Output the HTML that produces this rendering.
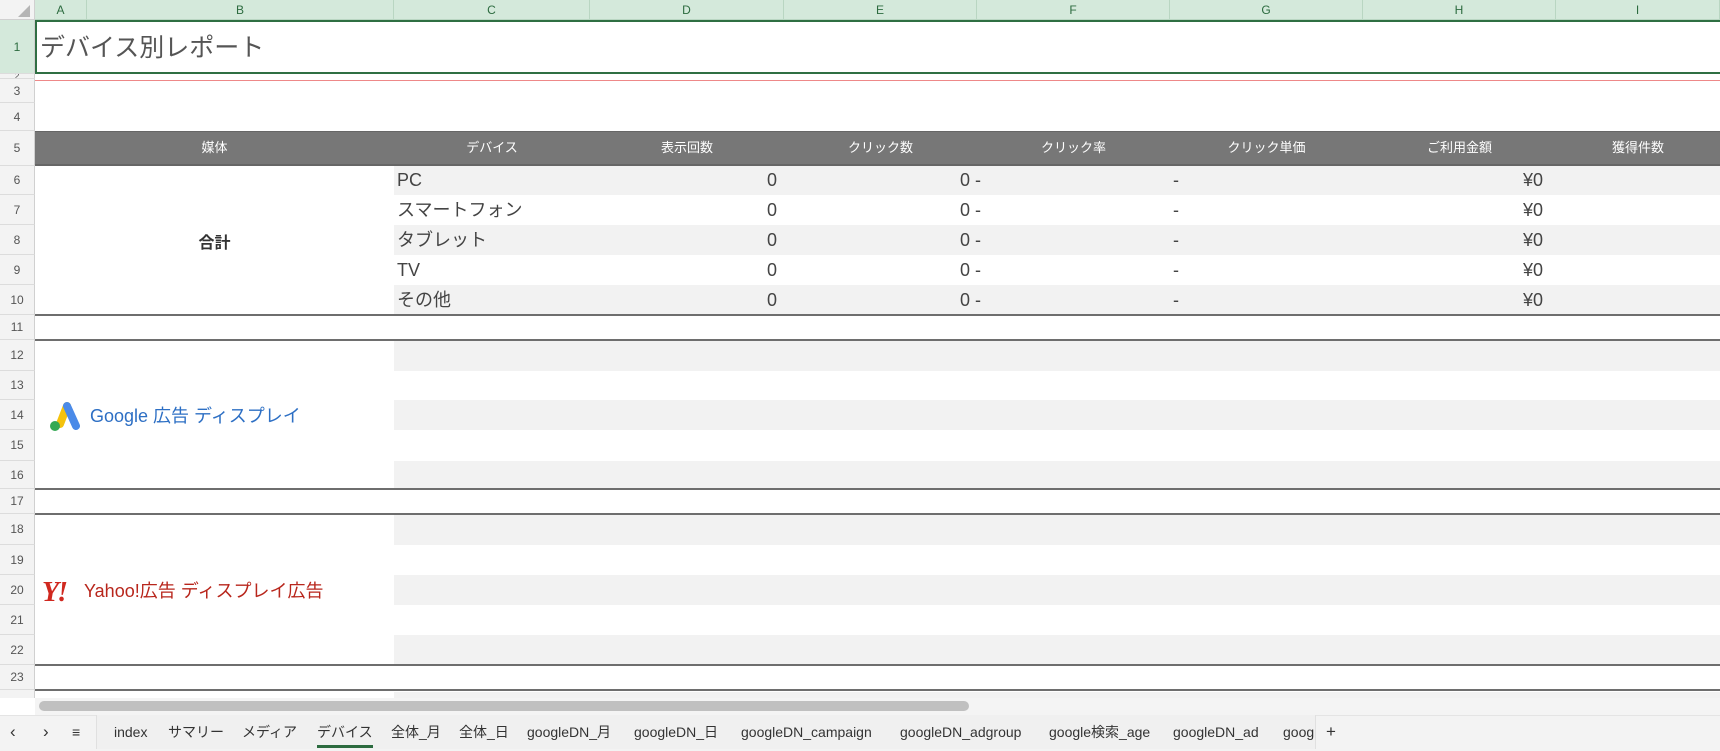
<!DOCTYPE html>
<html><head><meta charset="utf-8"><style>
*{margin:0;padding:0;box-sizing:border-box}
body{width:1720px;height:751px;overflow:hidden;background:#fff;font-family:"Liberation Sans","Noto Sans CJK JP",sans-serif;position:relative;color:#444}
.a{position:absolute}
.ch{top:0;height:20px;background:#d4e9db;border-right:1px solid #b9d6c2;border-bottom:1px solid #b9d6c2;font-size:12px;color:#2c6b3f;text-align:center;line-height:20px}
.rh{left:0;width:35px;background:#f3f3f3;border-bottom:1px solid #dcdcdc;border-right:1px solid #d0d0d0;font-size:12px;color:#555;text-align:center}
.g{background:#f2f2f2}
.hd{color:#fff;font-size:13px;text-align:center;top:131px;height:34px;line-height:34px}
.t{font-size:18px;color:#444;height:30px;line-height:30px;white-space:nowrap}
.thick{left:35px;width:1685px;height:2px;background:#6e6e6e}
.tab{top:715px;height:34px;line-height:34px;font-size:14px;color:#333;white-space:nowrap}
</style></head><body>
<div class="a ch" style="left:0;width:35px;background:#f3f3f3;border-color:#d0d0d0"></div>
<svg class="a" style="left:18px;top:5px" width="12" height="12"><polygon points="12,0 12,12 0,12" fill="#b5b5b5"/></svg>
<div class="a ch" style="left:35px;width:52px">A</div>
<div class="a ch" style="left:87px;width:307px">B</div>
<div class="a ch" style="left:394px;width:196px">C</div>
<div class="a ch" style="left:590px;width:194px">D</div>
<div class="a ch" style="left:784px;width:193px">E</div>
<div class="a ch" style="left:977px;width:193px">F</div>
<div class="a ch" style="left:1170px;width:193px">G</div>
<div class="a ch" style="left:1363px;width:193px">H</div>
<div class="a ch" style="left:1556px;width:164px">I</div>
<div class="a rh" style="top:20px;height:54px;line-height:54px;background:#d4e9db;color:#2c6b3f">1</div>
<div class="a rh" style="top:74px;height:5px;font-size:9px;line-height:5px;overflow:hidden">2</div>
<div class="a rh" style="top:79px;height:24px;line-height:24px">3</div>
<div class="a rh" style="top:103px;height:28px;line-height:28px">4</div>
<div class="a rh" style="top:131px;height:35px;line-height:35px">5</div>
<div class="a rh" style="top:166px;height:29px;line-height:29px">6</div>
<div class="a rh" style="top:195px;height:30px;line-height:30px">7</div>
<div class="a rh" style="top:225px;height:30px;line-height:30px">8</div>
<div class="a rh" style="top:255px;height:30px;line-height:30px">9</div>
<div class="a rh" style="top:285px;height:30px;line-height:30px">10</div>
<div class="a rh" style="top:315px;height:25px;line-height:25px">11</div>
<div class="a rh" style="top:340px;height:31px;line-height:31px">12</div>
<div class="a rh" style="top:371px;height:29px;line-height:29px">13</div>
<div class="a rh" style="top:400px;height:30px;line-height:30px">14</div>
<div class="a rh" style="top:430px;height:31px;line-height:31px">15</div>
<div class="a rh" style="top:461px;height:28px;line-height:28px">16</div>
<div class="a rh" style="top:489px;height:25px;line-height:25px">17</div>
<div class="a rh" style="top:514px;height:31px;line-height:31px">18</div>
<div class="a rh" style="top:545px;height:30px;line-height:30px">19</div>
<div class="a rh" style="top:575px;height:30px;line-height:30px">20</div>
<div class="a rh" style="top:605px;height:30px;line-height:30px">21</div>
<div class="a rh" style="top:635px;height:30px;line-height:30px">22</div>
<div class="a rh" style="top:665px;height:25px;line-height:25px">23</div>
<div class="a rh" style="top:690px;height:8px;border-bottom:none"></div>
<div class="a" style="left:35px;top:20px;width:1685px;height:54px;border:2px solid #2f6f43;border-right:none"></div>
<div class="a" style="left:40px;top:31px;font-size:25px;color:#555;line-height:34px">デバイス別レポート</div>
<div class="a" style="left:35px;top:80px;width:1685px;height:1px;background:#e88"></div>
<div class="a" style="left:35px;top:131px;width:1685px;height:35px;background:#777;border-top:1px solid #666;border-bottom:2px solid #666"></div>
<div class="a hd" style="left:35px;width:359px">媒体</div>
<div class="a hd" style="left:394px;width:196px">デバイス</div>
<div class="a hd" style="left:590px;width:194px">表示回数</div>
<div class="a hd" style="left:784px;width:193px">クリック数</div>
<div class="a hd" style="left:977px;width:193px">クリック率</div>
<div class="a hd" style="left:1170px;width:193px">クリック単価</div>
<div class="a hd" style="left:1363px;width:193px">ご利用金額</div>
<div class="a hd" style="left:1556px;width:164px">獲得件数</div>
<div class="a g" style="left:394px;top:166px;width:1326px;height:29px"></div>
<div class="a g" style="left:394px;top:225px;width:1326px;height:30px"></div>
<div class="a g" style="left:394px;top:285px;width:1326px;height:30px"></div>
<div class="a g" style="left:394px;top:340px;width:1326px;height:31px"></div>
<div class="a g" style="left:394px;top:400px;width:1326px;height:30px"></div>
<div class="a g" style="left:394px;top:461px;width:1326px;height:28px"></div>
<div class="a g" style="left:394px;top:514px;width:1326px;height:31px"></div>
<div class="a g" style="left:394px;top:575px;width:1326px;height:30px"></div>
<div class="a g" style="left:394px;top:635px;width:1326px;height:30px"></div>
<div class="a g" style="left:394px;top:692px;width:1326px;height:6px"></div>
<div class="a thick" style="top:314px"></div>
<div class="a thick" style="top:339px"></div>
<div class="a thick" style="top:488px"></div>
<div class="a thick" style="top:513px"></div>
<div class="a thick" style="top:664px"></div>
<div class="a thick" style="top:689px"></div>
<div class="a" style="left:35px;top:231px;width:359px;text-align:center;font-size:16px;color:#333;font-weight:bold;line-height:26px">合計</div>
<div class="a t" style="left:397px;top:165px">PC</div>
<div class="a t" style="left:397px;top:195px">スマートフォン</div>
<div class="a t" style="left:397px;top:225px">タブレット</div>
<div class="a t" style="left:397px;top:255px">TV</div>
<div class="a t" style="left:397px;top:285px">その他</div>
<div class="a t" style="left:767px;top:165px">0</div><div class="a t" style="left:767px;top:195px">0</div><div class="a t" style="left:767px;top:225px">0</div><div class="a t" style="left:767px;top:255px">0</div><div class="a t" style="left:767px;top:285px">0</div>
<div class="a t" style="left:960px;top:165px">0 -</div><div class="a t" style="left:960px;top:195px">0 -</div><div class="a t" style="left:960px;top:225px">0 -</div><div class="a t" style="left:960px;top:255px">0 -</div><div class="a t" style="left:960px;top:285px">0 -</div>
<div class="a t" style="left:1173px;top:165px">-</div><div class="a t" style="left:1173px;top:195px">-</div><div class="a t" style="left:1173px;top:225px">-</div><div class="a t" style="left:1173px;top:255px">-</div><div class="a t" style="left:1173px;top:285px">-</div>
<div class="a t" style="left:1523px;top:165px">¥0</div><div class="a t" style="left:1523px;top:195px">¥0</div><div class="a t" style="left:1523px;top:225px">¥0</div><div class="a t" style="left:1523px;top:255px">¥0</div><div class="a t" style="left:1523px;top:285px">¥0</div>
<svg class="a" style="left:47px;top:400px" width="34" height="32" viewBox="0 0 34 32">
<line x1="13" y1="24" x2="20" y2="6" stroke="#f4c20d" stroke-width="8" stroke-linecap="round"/>
<line x1="20" y1="6" x2="29" y2="26" stroke="#4a8ae8" stroke-width="8" stroke-linecap="round"/>
<circle cx="8" cy="26" r="5" fill="#34a853"/></svg>
<div class="a" style="left:90px;top:403px;font-size:18px;color:#2d6fc4;line-height:26px">Google 広告 ディスプレイ</div>
<div class="a" style="left:42px;top:576px;font-size:28px;font-weight:bold;font-style:italic;color:#d0281f;font-family:'Liberation Serif',serif;letter-spacing:-2px;line-height:34px">Y!</div>
<div class="a" style="left:84px;top:578px;font-size:18px;color:#b8261c;line-height:26px">Yahoo!広告 ディスプレイ広告</div>
<div class="a" style="left:35px;top:698px;width:1685px;height:17px;background:#f4f4f4"></div>
<div class="a" style="left:39px;top:701px;width:930px;height:10px;border-radius:5px;background:#c0c0c0"></div>
<div class="a" style="left:0;top:715px;width:1720px;height:36px;background:#f3f3f3;border-top:1px solid #e4e4e4"></div>
<div class="a" style="left:96px;top:715px;width:1220px;height:34px;background:#f0f0f0;border-left:1px solid #e0e0e0;border-right:1px solid #e0e0e0"></div>
<div class="a tab" style="left:10px;font-size:17px">‹</div>
<div class="a tab" style="left:43px;font-size:17px">›</div>
<div class="a tab" style="left:72px">≡</div>
<div class="a tab" style="left:114px">index</div>
<div class="a tab" style="left:168px">サマリー</div>
<div class="a tab" style="left:242px">メディア</div>
<div class="a tab" style="left:317px">デバイス</div>
<div class="a" style="left:317px;top:745px;width:56px;height:3px;background:#2c6b3f"></div>
<div class="a tab" style="left:391px">全体_月</div>
<div class="a tab" style="left:459px">全体_日</div>
<div class="a tab" style="left:527px">googleDN_月</div>
<div class="a tab" style="left:634px">googleDN_日</div>
<div class="a tab" style="left:741px">googleDN_campaign</div>
<div class="a tab" style="left:900px">googleDN_adgroup</div>
<div class="a tab" style="left:1049px">google検索_age</div>
<div class="a tab" style="left:1173px">googleDN_ad</div>
<div class="a tab" style="left:1283px;width:31px;overflow:hidden">google</div>
<div class="a tab" style="left:1326px;font-size:17px">+</div>
</body></html>
